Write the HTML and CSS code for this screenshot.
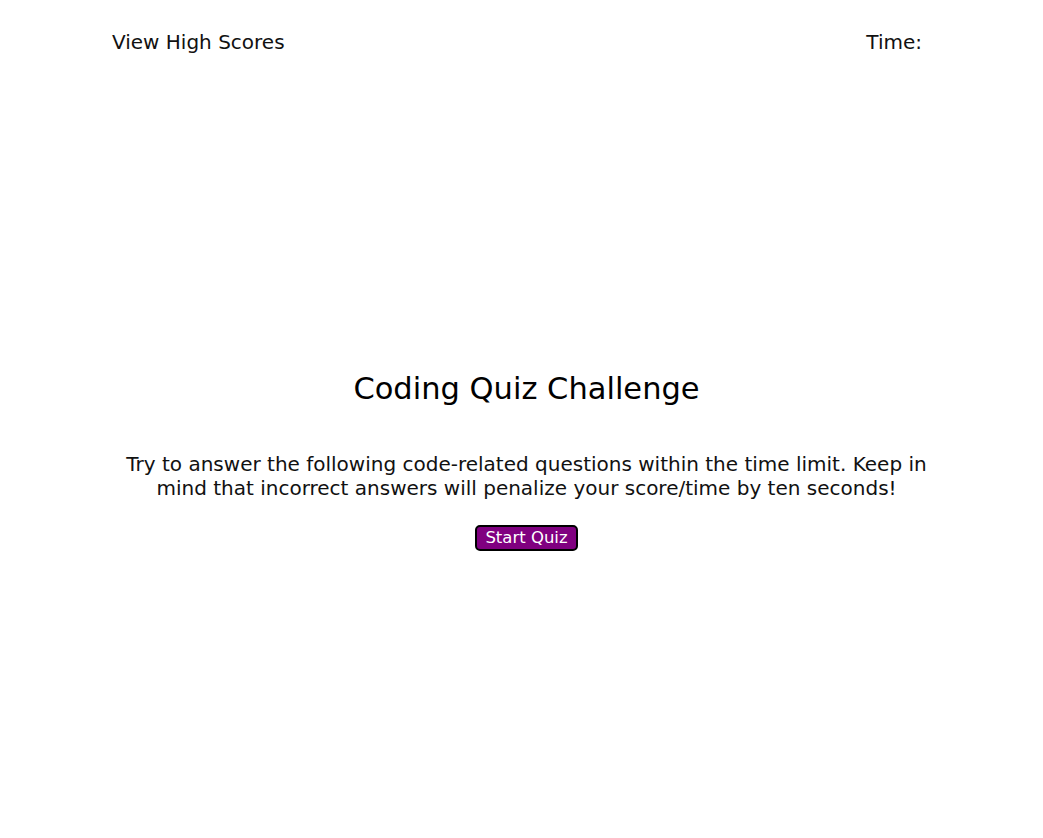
FILE: index.html
```html
<!DOCTYPE html>
<html lang="en">
<head>
<meta charset="utf-8">
<title>Coding Quiz</title>
<link rel="stylesheet" href="styles.css">
</head>
<body>
<header class="top">
  <a class="scores" href="#">View High Scores</a>
  <div class="timer">Time: <span class="time-val"></span></div>
</header>
<main class="intro">
  <h1 class="title">Coding Quiz Challenge</h1>
  <p class="desc">Try to answer the following code-related questions within the time limit. Keep in mind that incorrect answers will penalize your score/time by ten seconds!</p>
  <button class="start">Start Quiz</button>
</main>
</body>
</html>
```
FILE: styles.css
```css
html, body { margin: 0; padding: 0; background: #fff; }
body {
  font-family: "DejaVu Sans", "Noto Sans", sans-serif;
  color: #000;
}
.top {
  display: flex;
  justify-content: space-between;
  align-items: center;
  padding: 30px 121px 0 112px;
  height: 24px;
}
.scores {
  color: #111;
  text-decoration: none;
  font-size: 20px;
}
.timer {
  font-size: 20px;
  color: #111;
}
.intro {
  display: flex;
  flex-direction: column;
  align-items: center;
  padding: 316px 0 0 10px;
}
.title {
  margin: 0;
  font-size: 30.5px;
  font-weight: 500;
  line-height: 38px;
}
.desc {
  margin: 44px 0 0 0;
  width: 822px;
  text-align: center;
  font-size: 20px;
  line-height: 24px;
  color: #111;
}
.start {
  margin-top: 25px;
  font-family: inherit;
  font-size: 16.5px;
  color: #fff;
  background: #800080;
  border: 2px solid #000;
  border-radius: 5px;
  padding: 1px 8px;
  height: 26px;
  line-height: 20px;
}
```
